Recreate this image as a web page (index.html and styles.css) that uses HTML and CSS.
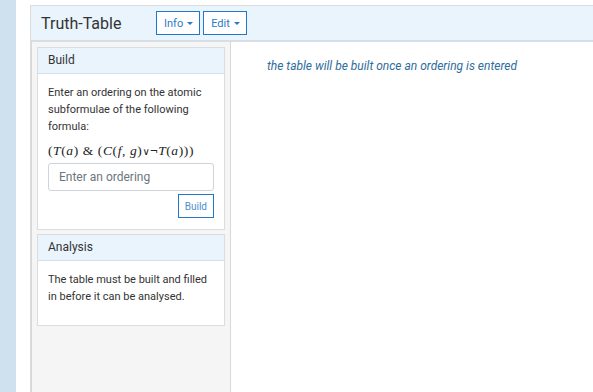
FILE: index.html
```html
<!DOCTYPE html>
<html lang="en">
<head>
    <meta charset="UTF-8">
    <title>Truth-Table</title>
    <link rel="stylesheet" href="styles.css">
</head>
<body>
    <div class="strip"></div>
    <div class="app">
        <div class="topbar">
            <span class="title">Truth-Table</span>
            <button class="menu-btn">Info <span class="caret"></span></button>
            <button class="menu-btn">Edit <span class="caret"></span></button>
        </div>
        <div class="workspace">
            <div class="sidebar">
                <div class="panel">
                    <div class="panel-head">Build</div>
                    <div class="panel-body">
                        <p>Enter an ordering on the atomic subformulae of the following formula:</p>
                        <div class="formula">(<i>T</i>(<i>a</i>) &amp; (<i>C</i>(<i>f</i>, <i>g</i>)<span class="op">∨¬</span><i>T</i>(<i>a</i>)))</div>
                        <input class="ordering" type="text" placeholder="Enter an ordering">
                        <div class="actions">
                            <button class="small-btn">Build</button>
                        </div>
                    </div>
                </div>
                <div class="panel">
                    <div class="panel-head">Analysis</div>
                    <div class="panel-body">
                        <p class="last">The table must be built and filled in before it can be analysed.</p>
                    </div>
                </div>
            </div>
            <div class="content">
                <p class="hint">the table will be built once an ordering is entered</p>
            </div>
        </div>
    </div>
</body>
</html>
```

FILE: styles.css
```css
body {
    margin: 0;
    display: flex;
    height: 392px;
    overflow: hidden;
    font-family: Roboto, "Liberation Sans", sans-serif;
    color: #333;
    background-color: #fff;
}
.strip {
    width: 16px;
    flex-shrink: 0;
    background-color: #cfe1ef;
}
.app {
    flex: 1;
    margin: 5px 0 0 14px;
    border-left: 1px solid #dcdcdc;
    border-top: 1px solid #dcdcdc;
    display: flex;
    flex-direction: column;
}
.topbar {
    height: 34px;
    background-color: #eaf4fd;
    border-bottom: 2px solid #d6dde3;
    display: flex;
    align-items: center;
    padding-left: 10px;
}
.title {
    font-size: 16px;
    width: 115px;
}
.menu-btn {
    height: 24px;
    margin-right: 3px;
    padding: 0 6px 0 7px;
    border: 1px solid #1f78c8;
    background-color: #fff;
    color: #2a7bc6;
    font-family: inherit;
    font-size: 11px;
    display: flex;
    align-items: center;
    gap: 4px;
}
.caret {
    width: 0;
    height: 0;
    border-left: 3px solid transparent;
    border-right: 3px solid transparent;
    border-top: 3px solid #2a7bc6;
}
.workspace {
    flex: 1;
    display: flex;
}
.sidebar {
    width: 200px;
    flex-shrink: 0;
    background-color: #f5f5f5;
    border-left: 1px solid #d8d8d8;
    border-right: 1px solid #d8d8d8;
    padding: 5px;
    box-sizing: border-box;
}
.panel {
    background-color: #fff;
    border: 1px solid #d8dde2;
    margin-bottom: 4px;
}
.panel-head {
    height: 25px;
    line-height: 25px;
    padding-left: 10px;
    font-size: 12px;
    background-color: #eaf4fd;
    border-bottom: 1px solid #d6e0ea;
}
.panel-body {
    padding: 10px 10px 11px;
}
.panel-body p {
    margin: 0;
    font-size: 11px;
    line-height: 17px;
}
.panel-body p.last {
    margin-bottom: 9px;
}
.formula {
    margin-top: 7px;
    font-family: "Liberation Serif", "DejaVu Serif", serif;
    font-size: 13.5px;
    letter-spacing: 0.6px;
    line-height: 18px;
    height: 21px;
    color: #222;
}
.formula .op {
    font-family: "DejaVu Sans", sans-serif;
    font-size: 10px;
    letter-spacing: 0;
}
.ordering {
    display: block;
    width: 166px;
    height: 28px;
    box-sizing: border-box;
    border: 1px solid #ced4da;
    border-radius: 3px;
    padding: 0 10px;
    font-family: inherit;
    font-size: 12px;
    color: #555;
}
.ordering::placeholder {
    color: #6c757d;
}
.actions {
    display: flex;
    justify-content: flex-end;
    margin-top: 3px;
}
.small-btn {
    height: 24px;
    padding: 0 6px;
    border: 1px solid #1f78c8;
    background-color: #fff;
    color: #4a90d0;
    font-family: inherit;
    font-size: 10px;
}
.content {
    flex: 1;
    padding: 0 0 0 36px;
}
.hint {
    margin: 17px 0 0;
    font-size: 12px;
    font-style: italic;
    color: #2e6d9c;
}
```
